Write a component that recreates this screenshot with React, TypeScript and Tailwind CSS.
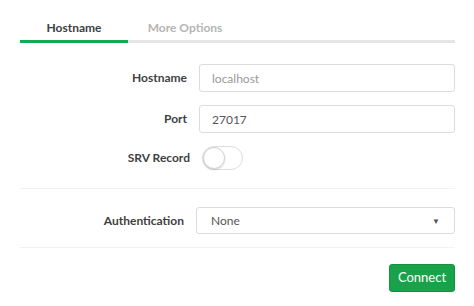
export default function App() {
  return (
    <div className="w-[474px] h-[306px] bg-white font-['Lato',sans-serif] text-[12px]">
      <div className="pl-[20px] pr-[19px] pt-[19px]">
        {/* tabs */}
        <div className="flex border-b-[3px] border-[#e5e5e5] h-[24px]">
          <div className="w-[108px] -mb-[3px] border-b-[3px] border-[#13aa52] text-center font-bold text-[#3d3f41] leading-[17px]">
            Hostname
          </div>
          <div className="w-[114px] text-center font-bold text-[#b5b5b5] leading-[17px]">
            More Options
          </div>
        </div>

        {/* hostname section */}
        <div className="flex flex-col gap-[13px] pt-[21px] pb-[18px] border-b border-[#f2f2f2]">
          <div className="flex items-center">
            <label className="w-[167px] text-right font-bold text-[#3f3f3f]">Hostname</label>
            <input
              className="ml-[12px] flex-1 h-[28px] px-[12px] border border-[#dcdcdc] rounded-[3px] text-[#999] placeholder-[#999] outline-none"
              placeholder="localhost"
            />
          </div>
          <div className="flex items-center">
            <label className="w-[167px] text-right font-bold text-[#3f3f3f]">Port</label>
            <input
              className="ml-[12px] flex-1 h-[28px] px-[12px] border border-[#dcdcdc] rounded-[3px] text-[#555] outline-none"
              defaultValue="27017"
            />
          </div>
          <div className="flex items-center">
            <label className="w-[170px] text-right font-bold text-[#3f3f3f]">SRV Record</label>
            <div className="ml-[12px] w-[41px] h-[24px] rounded-full border border-[#dedede] bg-white relative">
              <div className="absolute left-0 top-0 w-[22px] h-[22px] rounded-full bg-white border border-[#d2d2d2] shadow-[0_1px_2px_rgba(0,0,0,0.15)]" />
            </div>
          </div>
        </div>

        {/* authentication */}
        <div className="flex items-center pt-[18px] pb-[13px] border-b border-[#f2f2f2]">
          <label className="w-[164px] text-right font-bold text-[#3f3f3f]">Authentication</label>
          <div className="ml-[12px] flex-1 h-[27px] border border-[#dcdcdc] rounded-[3px] flex items-center justify-between px-[14px] text-[#555]">
            <span>None</span>
            <span className="text-[8px] text-[#555]">▼</span>
          </div>
        </div>

        <div className="flex justify-end pt-[16px]">
          <button className="w-[66px] h-[28px] rounded-[3px] bg-[#19a24a] border border-[#13923f] text-white text-[13px]">
            Connect
          </button>
        </div>
      </div>
    </div>
  );
}
